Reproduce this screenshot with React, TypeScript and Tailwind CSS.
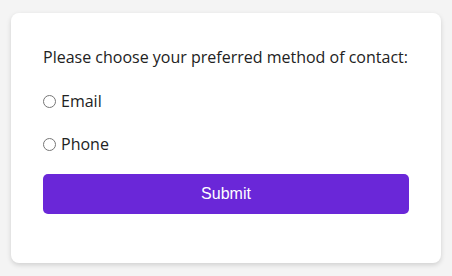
import React from "react";

export default function App() {
  return (
    <div className="min-h-screen w-full bg-[#f4f4f4] pt-[13px] pl-[11px]" style={{ fontFamily: '"Open Sans", sans-serif' }}>
      <div className="w-[430px] h-[250px] bg-white rounded-[8px] shadow-[0_2px_5px_rgba(0,0,0,0.15)] px-[32px] pt-[32px]">
        <p className="text-[16px] leading-[24px] text-[#222]">Please choose your preferred method of contact:</p>
        <label className="mt-[20px] flex items-center h-[24px] text-[16px] text-[#222]">
          <input type="radio" name="c" className="m-0 mr-[5px] w-[13px] h-[13px]" />
          Email
        </label>
        <label className="mt-[19px] flex items-center h-[24px] text-[16px] text-[#222]">
          <input type="radio" name="c" className="m-0 mr-[5px] w-[13px] h-[13px]" />
          Phone
        </label>
        <button className="mt-[18px] w-full h-[40px] rounded-[5px] bg-[#6a27d8] text-white text-[16px]" style={{ fontFamily: '"Liberation Sans", Arial, sans-serif' }}>
          Submit
        </button>
      </div>
    </div>
  );
}
